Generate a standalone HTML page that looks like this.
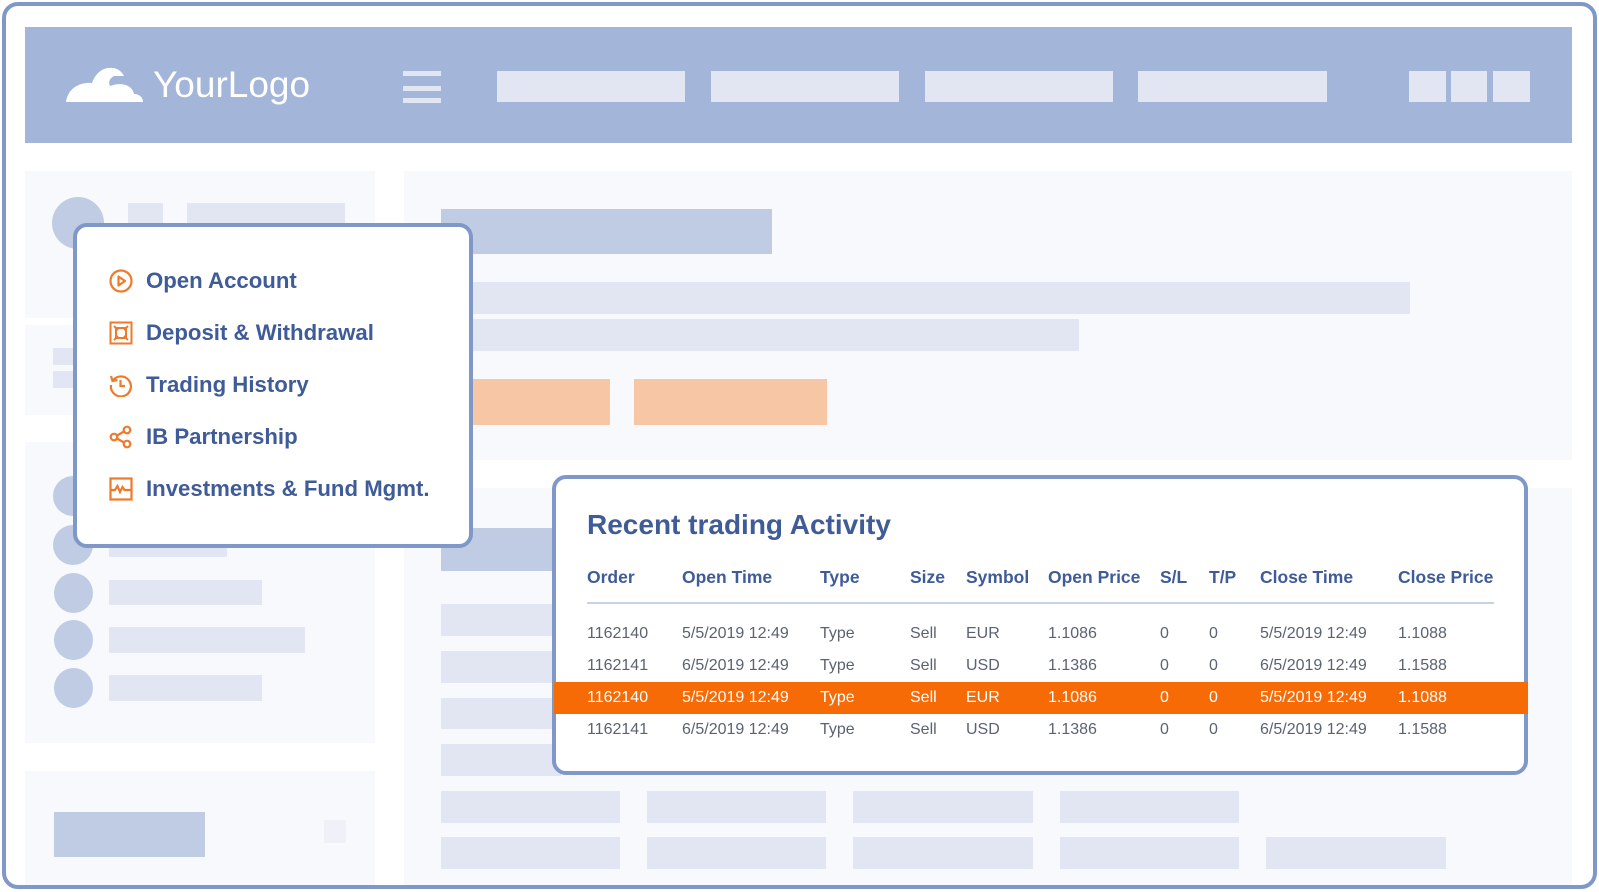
<!DOCTYPE html>
<html><head><meta charset="utf-8"><style>
*{margin:0;padding:0;box-sizing:border-box}
body{width:1599px;height:892px;background:#fff;position:relative;overflow:hidden;font-family:"Liberation Sans",sans-serif}
div{position:absolute}
.frame{left:2px;top:2px;width:1595px;height:887px;border:4px solid #7f98c8;border-radius:16px;z-index:10}
.hdr{left:25px;top:27px;width:1547px;height:116px;background:#a3b5d9}
.nb{background:#e1e6f2;top:71px;height:31px}
.pn{background:#f7f9fd}
.lb{background:#e1e6f2}
.db{background:#bfcce3}
.av{background:#bfcce3;border-radius:50%}
.menu{left:73px;top:223px;width:400px;height:325px;background:#fff;border:4px solid #7f98c8;border-radius:14px}
.mi{left:69px;font-size:22.2px;font-weight:bold;color:#3f5b98;line-height:30px;white-space:nowrap}
.ic{left:32px;width:24px;height:24px}
.card{left:552px;top:475px;width:976px;height:300px;background:#fff;border:4px solid #7f98c8;border-radius:14px}
.t{position:absolute;white-space:nowrap}
.h{font-size:17.5px;font-weight:bold;color:#3f5b98;top:88px}
.r{font-size:16px;color:#5b6273}
</style></head><body>
<div class="frame"></div>
<div class="hdr"></div>
<svg style="position:absolute;left:66px;top:64px" width="78" height="40" viewBox="0 0 78 40"><path d="M0 38 C2 24 14 18 26 19 C30 8 38 3 46 4 C52 4 56 8 58 12 L48 12 C44 14 42 18 44 22 C54 18 66 20 68 30 C74 30 77 34 77 38 Z" fill="#fff"/></svg>
<div style="left:153px;top:64px;font-size:37px;color:#fff;line-height:42px">YourLogo</div>
<div style="left:403px;top:71px;width:38px;height:5px;background:#e1e6f2"></div>
<div style="left:403px;top:86px;width:38px;height:5px;background:#e1e6f2"></div>
<div style="left:403px;top:98px;width:38px;height:5px;background:#e1e6f2"></div>
<div class="nb" style="left:497px;width:188px"></div>
<div class="nb" style="left:711px;width:188px"></div>
<div class="nb" style="left:925px;width:188px"></div>
<div class="nb" style="left:1138px;width:189px"></div>
<div class="nb" style="left:1409px;width:37px"></div>
<div class="nb" style="left:1451px;width:36px"></div>
<div class="nb" style="left:1493px;width:37px"></div>

<div class="pn" style="left:25px;top:171px;width:350px;height:147px"></div>
<div class="pn" style="left:25px;top:325px;width:350px;height:90px"></div>
<div class="pn" style="left:25px;top:442px;width:350px;height:301px"></div>
<div class="pn" style="left:25px;top:771px;width:350px;height:114px"></div>
<div class="av" style="left:52px;top:197px;width:52px;height:52px"></div>
<div class="lb" style="left:128px;top:203px;width:35px;height:20px"></div>
<div class="lb" style="left:187px;top:203px;width:158px;height:20px"></div>
<div class="lb" style="left:53px;top:348px;width:20px;height:17px"></div>
<div class="lb" style="left:53px;top:371px;width:20px;height:17px"></div>
<div class="av" style="left:53px;top:476px;width:40px;height:40px"></div>
<div class="av" style="left:53px;top:525px;width:40px;height:40px"></div>
<div class="lb" style="left:109px;top:535px;width:118px;height:22px"></div>
<div class="av" style="left:54px;top:573px;width:39px;height:40px"></div>
<div class="lb" style="left:109px;top:580px;width:153px;height:25px"></div>
<div class="av" style="left:54px;top:620px;width:39px;height:40px"></div>
<div class="lb" style="left:109px;top:627px;width:196px;height:26px"></div>
<div class="av" style="left:54px;top:668px;width:39px;height:40px"></div>
<div class="lb" style="left:109px;top:675px;width:153px;height:26px"></div>
<div class="db" style="left:54px;top:812px;width:151px;height:45px"></div>
<div class="lb" style="left:324px;top:820px;width:22px;height:23px;background:#eef1f8"></div>

<div class="pn" style="left:404px;top:171px;width:1168px;height:289px"></div>
<div class="pn" style="left:404px;top:488px;width:1168px;height:397px"></div>
<div class="db" style="left:441px;top:209px;width:331px;height:45px"></div>
<div class="lb" style="left:441px;top:282px;width:969px;height:32px"></div>
<div class="lb" style="left:441px;top:319px;width:638px;height:32px"></div>
<div style="left:441px;top:379px;width:169px;height:46px;background:#f7c7a5"></div>
<div style="left:634px;top:379px;width:193px;height:46px;background:#f7c7a5"></div>
<div class="db" style="left:441px;top:528px;width:120px;height:43px"></div>
<div class="lb" style="left:441px;top:604px;width:120px;height:32px"></div>
<div class="lb" style="left:441px;top:651px;width:120px;height:32px"></div>
<div class="lb" style="left:441px;top:698px;width:120px;height:31px"></div>
<div class="lb" style="left:441px;top:744px;width:120px;height:32px"></div>
<div class="lb" style="left:441px;top:791px;width:179px;height:32px"></div>
<div class="lb" style="left:647px;top:791px;width:179px;height:32px"></div>
<div class="lb" style="left:853px;top:791px;width:180px;height:32px"></div>
<div class="lb" style="left:1060px;top:791px;width:179px;height:32px"></div>
<div class="lb" style="left:441px;top:837px;width:179px;height:32px"></div>
<div class="lb" style="left:647px;top:837px;width:179px;height:32px"></div>
<div class="lb" style="left:853px;top:837px;width:180px;height:32px"></div>
<div class="lb" style="left:1060px;top:837px;width:179px;height:32px"></div>
<div class="lb" style="left:1266px;top:837px;width:180px;height:32px"></div>

<div class="menu">
<svg class="ic" style="position:absolute;top:42px" viewBox="0 0 24 24" fill="none" stroke="#ee7a2a" stroke-width="2.2"><circle cx="12" cy="12" r="10.5"/><path d="M9.5 7.5 L16 12 L9.5 16.5 Z" stroke-linejoin="round"/></svg>
<div class="mi" style="top:39px">Open Account</div>
<svg class="ic" style="position:absolute;top:94px" viewBox="0 0 24 24" fill="none" stroke="#ee7a2a" stroke-width="2"><rect x="1.5" y="1.5" width="21" height="21"/><rect x="7" y="7" width="10" height="10"/><path d="M5 5 L9 9 M19 5 L15 9 M5 19 L9 15 M19 19 L15 15"/></svg>
<div class="mi" style="top:91px">Deposit &amp; Withdrawal</div>
<svg class="ic" style="position:absolute;top:146px" viewBox="0 0 24 24" fill="none" stroke="#ee7a2a" stroke-width="2.2"><path d="M3.5 8 A10 10 0 1 1 2 12"/><path d="M2 3 L3.5 8 L8.5 7"/><path d="M11.5 7 V13 H16"/></svg>
<div class="mi" style="top:143px">Trading History</div>
<svg class="ic" style="position:absolute;top:198px" viewBox="0 0 24 24" fill="none" stroke="#ee7a2a" stroke-width="2.2"><circle cx="5" cy="12" r="3.3"/><circle cx="18" cy="5" r="3.3"/><circle cx="18" cy="19" r="3.3"/><path d="M8 10.5 L15 6.5 M8 13.5 L15 17.5"/></svg>
<div class="mi" style="top:195px">IB Partnership</div>
<svg class="ic" style="position:absolute;top:250px" viewBox="0 0 24 24" fill="none" stroke="#ee7a2a" stroke-width="2.2"><rect x="1.5" y="1.5" width="21" height="21"/><path d="M1.5 13 H6 L8.5 9 L11 15 L13.5 10 L15.5 13 H22.5"/></svg>
<div class="mi" style="top:247px">Investments &amp; Fund Mgmt.</div>
</div>

<div class="card">
<div class="t" style="left:31px;top:30px;font-size:28px;font-weight:bold;color:#3f5b98">Recent trading Activity</div>
<div class="t h" style="left:31px">Order</div>
<div class="t h" style="left:126px">Open Time</div>
<div class="t h" style="left:264px">Type</div>
<div class="t h" style="left:354px">Size</div>
<div class="t h" style="left:410px">Symbol</div>
<div class="t h" style="left:492px">Open Price</div>
<div class="t h" style="left:604px">S/L</div>
<div class="t h" style="left:653px">T/P</div>
<div class="t h" style="left:704px">Close Time</div>
<div class="t h" style="left:842px">Close Price</div>
<div style="left:31px;top:123px;width:907px;height:2px;background:#c9d2e3"></div>
<div style="left:-2px;top:203px;width:974px;height:32px;background:#f76b07"></div>
<div style="left:0;top:146px;width:970px">
<div class="t r" style="left:31px">1162140</div><div class="t r" style="left:126px">5/5/2019 12:49</div><div class="t r" style="left:264px">Type</div><div class="t r" style="left:354px">Sell</div><div class="t r" style="left:410px">EUR</div><div class="t r" style="left:492px">1.1086</div><div class="t r" style="left:604px">0</div><div class="t r" style="left:653px">0</div><div class="t r" style="left:704px">5/5/2019 12:49</div><div class="t r" style="left:842px">1.1088</div></div>
<div style="left:0;top:178px;width:970px">
<div class="t r" style="left:31px">1162141</div><div class="t r" style="left:126px">6/5/2019 12:49</div><div class="t r" style="left:264px">Type</div><div class="t r" style="left:354px">Sell</div><div class="t r" style="left:410px">USD</div><div class="t r" style="left:492px">1.1386</div><div class="t r" style="left:604px">0</div><div class="t r" style="left:653px">0</div><div class="t r" style="left:704px">6/5/2019 12:49</div><div class="t r" style="left:842px">1.1588</div></div>
<div style="left:0;top:210px;width:970px">
<div class="t r" style="left:31px;color:#fff">1162140</div><div class="t r" style="left:126px;color:#fff">5/5/2019 12:49</div><div class="t r" style="left:264px;color:#fff">Type</div><div class="t r" style="left:354px;color:#fff">Sell</div><div class="t r" style="left:410px;color:#fff">EUR</div><div class="t r" style="left:492px;color:#fff">1.1086</div><div class="t r" style="left:604px;color:#fff">0</div><div class="t r" style="left:653px;color:#fff">0</div><div class="t r" style="left:704px;color:#fff">5/5/2019 12:49</div><div class="t r" style="left:842px;color:#fff">1.1088</div></div>
<div style="left:0;top:242px;width:970px">
<div class="t r" style="left:31px">1162141</div><div class="t r" style="left:126px">6/5/2019 12:49</div><div class="t r" style="left:264px">Type</div><div class="t r" style="left:354px">Sell</div><div class="t r" style="left:410px">USD</div><div class="t r" style="left:492px">1.1386</div><div class="t r" style="left:604px">0</div><div class="t r" style="left:653px">0</div><div class="t r" style="left:704px">6/5/2019 12:49</div><div class="t r" style="left:842px">1.1588</div></div>
</div>
</body></html>
